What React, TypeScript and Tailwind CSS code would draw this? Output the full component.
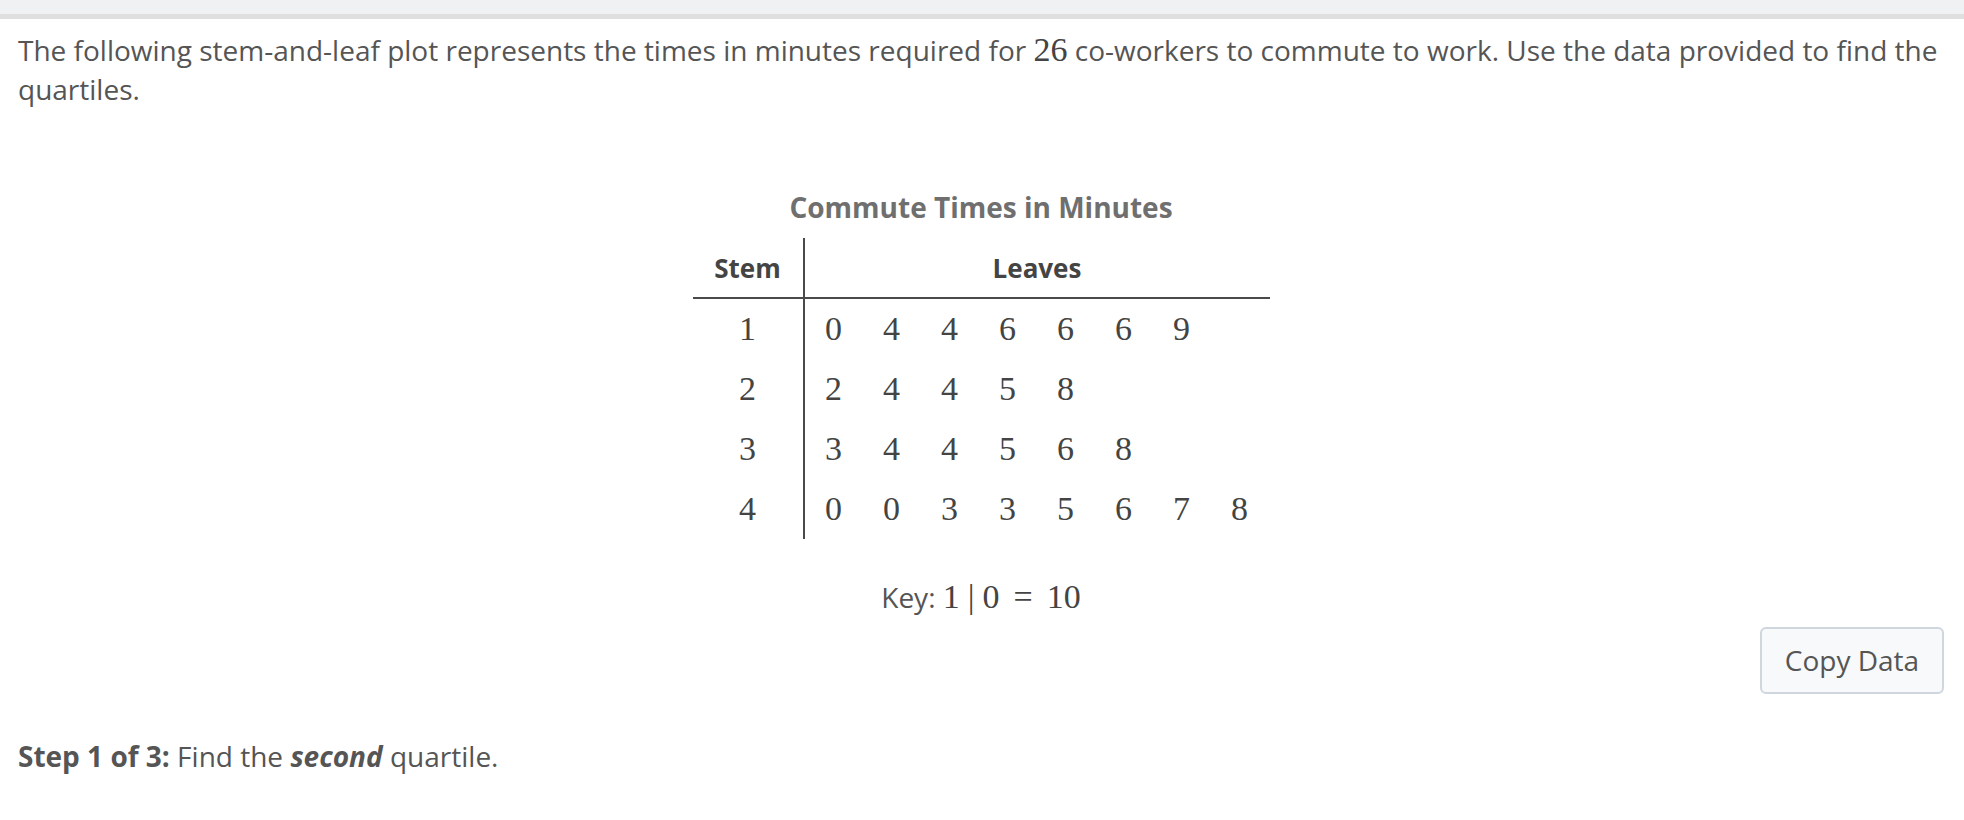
const rows: { stem: number; leaves: number[] }[] = [
  { stem: 1, leaves: [0, 4, 4, 6, 6, 6, 9] },
  { stem: 2, leaves: [2, 4, 4, 5, 8] },
  { stem: 3, leaves: [3, 4, 4, 5, 6, 8] },
  { stem: 4, leaves: [0, 0, 3, 3, 5, 6, 7, 8] },
];

const serif = "font-['Liberation_Serif','Times_New_Roman',serif]";

export default function App() {
  return (
    <div className="min-h-screen bg-white font-['Open_Sans','Liberation_Sans',sans-serif] text-[28px] leading-[39px] text-[#555]">
      {/* top strip */}
      <div className="h-[14px] bg-[#f0f1f3]" />
      <div className="h-[5px] bg-[#dfdfdf]" />

      <div className="pl-[18px] pr-[20px] pt-[12px]">
        <p>
          The following stem-and-leaf plot represents the times in minutes required for{" "}
          <span className={`${serif} text-[34px] leading-none text-[#444]`}>26</span> co-workers to
          commute to work. Use the data provided to find the quartiles.
        </p>

        {/* Stem-and-leaf table */}
        <div className="mt-[79px] flex flex-col items-center">
          <div className="font-bold text-[#6f6f6f]">Commute Times in Minutes</div>

          <div className="mt-[11px] w-[577px] text-[#444]">
            <div className="flex h-[61px] border-b-2 border-[#4a4a4a]">
              <div className="flex w-[112px] items-center justify-center border-r-2 border-[#4a4a4a] text-[26px] font-bold leading-none">
                Stem
              </div>
              <div className="flex flex-1 items-center justify-center text-[26px] font-bold leading-none">
                Leaves
              </div>
            </div>
            {rows.map((row) => (
              <div key={row.stem} className="flex h-[60px]">
                <div
                  className={`flex w-[112px] items-center justify-center border-r-2 border-[#4a4a4a] ${serif} text-[34px] leading-none`}
                >
                  {row.stem}
                </div>
                <div className={`flex flex-1 items-center ${serif} text-[34px] leading-none`}>
                  {row.leaves.map((leaf, i) => (
                    <span key={i} className="w-[58px] text-center">
                      {leaf}
                    </span>
                  ))}
                </div>
              </div>
            ))}
          </div>

          <div className="mt-[39px]">
            Key:{" "}
            <span className={`${serif} text-[34px] leading-none text-[#444]`}>
              1<span className="mx-[8px]">|</span>0<span className="mx-[14px]">=</span>10
            </span>
          </div>
        </div>

        <div className="mt-[10px] flex justify-end">
          <button
            type="button"
            className="h-[67px] w-[184px] rounded-[6px] border-2 border-[#cfd6de] bg-[#f7f9fb] text-[28px] text-[#555]"
          >
            Copy Data
          </button>
        </div>

        <p className="mt-[43px]">
          <span className="font-bold">Step 1 of 3:</span> Find the{" "}
          <span className="font-bold italic">second</span> quartile.
        </p>
      </div>
    </div>
  );
}
